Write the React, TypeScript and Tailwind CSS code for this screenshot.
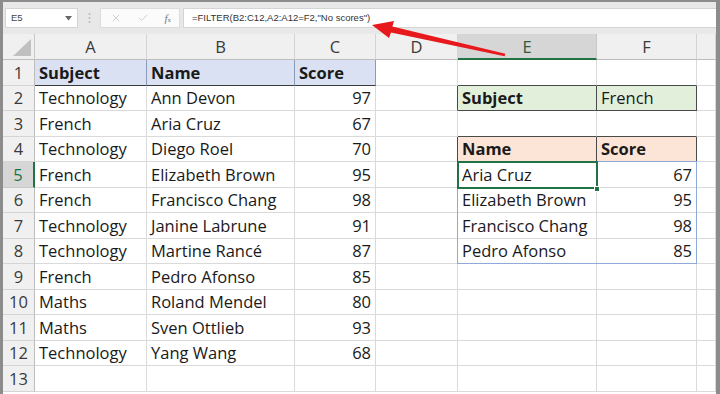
import { X, Check } from 'lucide-react';

const DATA: string[][] = [
  ['Subject', 'Name', 'Score', '', '', '', ''],
  ['Technology', 'Ann Devon', '97', '', 'Subject', 'French', ''],
  ['French', 'Aria Cruz', '67', '', '', '', ''],
  ['Technology', 'Diego Roel', '70', '', 'Name', 'Score', ''],
  ['French', 'Elizabeth Brown', '95', '', 'Aria Cruz', '67', ''],
  ['French', 'Francisco Chang', '98', '', 'Elizabeth Brown', '95', ''],
  ['Technology', 'Janine Labrune', '91', '', 'Francisco Chang', '98', ''],
  ['Technology', 'Martine Rancé', '87', '', 'Pedro Afonso', '85', ''],
  ['French', 'Pedro Afonso', '85', '', '', '', ''],
  ['Maths', 'Roland Mendel', '80', '', '', '', ''],
  ['Maths', 'Sven Ottlieb', '93', '', '', '', ''],
  ['Technology', 'Yang Wang', '68', '', '', '', ''],
  ['', '', '', '', '', '', ''],
];

const COLS = ['A', 'B', 'C', 'D', 'E', 'F', ''];

function cellClass(r: number, c: number): string {
  let bg = 'bg-white';
  let rb = 'border-r-[#dadada]';
  let bb = 'border-b-[#dadada]';
  let fw = 'font-normal';
  let align = 'justify-start';
  if (r === 1 && c <= 2) {
    bg = 'bg-[#d9e1f2]';
    fw = 'font-bold';
    rb = 'border-r-[#8a9bb8]';
    bb = 'border-b-[#3a3a3a]';
  }
  if ((r === 1 || r === 3) && (c === 4 || c === 5)) bb = 'border-b-[#4a4a4a]';
  if ((r === 2 || r === 4) && c === 3) rb = 'border-r-[#4a4a4a]';
  if (r === 2 && (c === 4 || c === 5)) {
    bg = 'bg-[#e2efda]';
    rb = 'border-r-[#4a4a4a]';
    bb = 'border-b-[#4a4a4a]';
    if (c === 4) fw = 'font-bold';
  }
  if (r === 4 && (c === 4 || c === 5)) {
    bg = 'bg-[#fce4d6]';
    rb = 'border-r-[#4a4a4a]';
    bb = 'border-b-[#4a4a4a]';
    fw = 'font-bold';
  }
  if ((c === 2 && r >= 2 && r <= 12) || (c === 5 && r >= 5 && r <= 8)) align = 'justify-end';
  return `${bg} ${rb} ${bb} ${fw} ${align}`;
}

export default function App() {
  return (
    <div className="relative w-[720px] h-[394px] overflow-hidden bg-[#8c8c8c] pl-[3px] pt-[2px] pr-[4px] font-['Open_Sans',sans-serif]">
      <div className="flex flex-col bg-white h-[391.5px]">
        {/* Formula bar */}
        <div className="h-[32px] bg-[#e8e8e8] flex items-start pt-[6px] pl-[2px] font-['Liberation_Sans',Arial,sans-serif]">
          <div className="w-[73px] h-[20px] bg-white border border-[#d4d4d4] flex items-center justify-between pl-[5px] pr-[5px] text-[9.5px] text-[#444]">
            <span>E5</span>
            <svg width="7" height="5" viewBox="0 0 7 5">
              <polygon points="0,0 7,0 3.5,4.5" fill="#666" />
            </svg>
          </div>
          <div className="w-[22px] h-[20px] flex items-center justify-center">
            <svg width="3" height="12" viewBox="0 0 3 12">
              <circle cx="1.5" cy="2" r="1" fill="#b8b8b8" />
              <circle cx="1.5" cy="6" r="1" fill="#b8b8b8" />
              <circle cx="1.5" cy="10" r="1" fill="#b8b8b8" />
            </svg>
          </div>
          <div className="w-[80px] h-[20px] bg-[#fbfbfb] border border-[#dcdcdc] flex items-center justify-between pl-[9px] pr-[8px]">
            <X size={12} strokeWidth={1.5} color="#c2c2c2" />
            <Check size={12} strokeWidth={1.5} color="#c2c2c2" />
            <span className="italic font-['Liberation_Serif',serif] text-[11px] text-[#777] leading-none">
              f<span className="text-[7px] not-italic">x</span>
            </span>
          </div>
          <div className="ml-[3px] flex-1 h-[20px] bg-white border border-[#d4d4d4] border-r-0 flex items-center pl-[8px] text-[9.5px] text-[#333] whitespace-nowrap">
            =FILTER(B2:C12,A2:A12=F2,"No scores")
          </div>
        </div>

        {/* Grid */}
        <div className="relative grid grid-cols-[32px_112px_148px_81px_82px_139px_100px_19px] grid-rows-[26px_repeat(13,25.5px)] text-[16.5px] text-[#1a1a1a]">
          {/* Corner */}
          <div className="bg-[#f0f0f0] border-r border-b border-r-[#c8c8c8] border-b-[#bdbdbd] flex items-end justify-end pr-[3px] pb-[3px]">
            <svg width="18" height="17" viewBox="0 0 18 17">
              <polygon points="18,0 18,17 0,17" fill="#c0c0c0" />
            </svg>
          </div>
          {COLS.map((l, i) => (
            <div
              key={'h' + i}
              className={
                i === 4
                  ? 'bg-[#d6d6d6] border-r border-r-[#c8c8c8] border-b-2 border-b-[#217346] flex items-center justify-center pt-[2px] text-[#2f5a40]'
                  : 'bg-[#f0f0f0] border-r border-b border-r-[#d4d4d4] border-b-[#bdbdbd] flex items-center justify-center pt-[2px] text-[#3a3a3a]'
              }
            >
              {l}
            </div>
          ))}
          {DATA.map((row, ri) => {
            const r = ri + 1;
            return [
              <div
                key={'r' + r}
                className={
                  r === 5
                    ? 'bg-[#d6d6d6] border-b border-b-[#c8c8c8] border-r-2 border-r-[#217346] flex items-center justify-center pt-[2px] text-[#217346]'
                    : 'bg-[#f0f0f0] border-r border-b border-r-[#bdbdbd] border-b-[#d4d4d4] flex items-center justify-center pt-[2px] text-[#3a3a3a]'
                }
              >
                {r}
              </div>,
              ...row.map((v, c) => (
                <div
                  key={r + '-' + c}
                  className={`border-r border-b flex items-center px-[4px] pt-[2px] whitespace-nowrap overflow-hidden ${cellClass(r, c)}`}
                >
                  {v}
                </div>
              )),
            ];
          })}

          {/* Spill range border */}
          <div className="absolute left-[454px] top-[127px] w-[240px] h-[103px] border border-[#8eaadb] pointer-events-none" />
          {/* Active cell */}
          <div className="absolute left-[454px] top-[127px] w-[141px] h-[28px] border-2 border-[#217346] pointer-events-none" />
          <div className="absolute left-[591px] top-[152px] w-[6px] h-[6px] bg-[#217346] border border-white pointer-events-none" />
        </div>
      </div>

      {/* Red arrow */}
      <svg className="absolute left-0 top-0 pointer-events-none" width="720" height="394" viewBox="0 0 720 394">
        <polygon
          points="372,25 394,21 392.4,26.4 505.3,53.8 504.7,56.2 391,32.6 389,38"
          fill="#e8191c"
        />
      </svg>
    </div>
  );
}
